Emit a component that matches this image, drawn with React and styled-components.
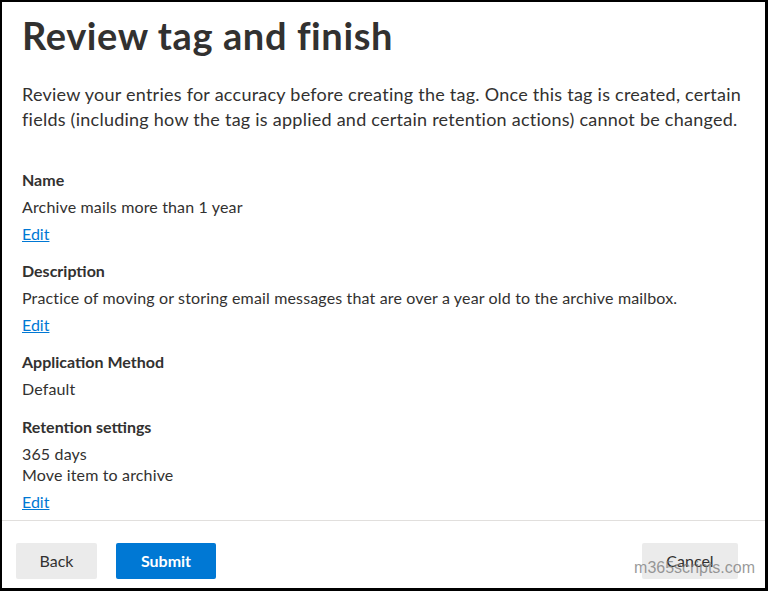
import React from 'react';
import styled, { createGlobalStyle } from 'styled-components';

const COLORS = {
	text: '#323130',
	link: '#0078d4',
	primary: '#0078d4',
	neutral: '#ebebeb',
	divider: '#e1dfdd'
};

const sections = [
	{ label: 'Name', values: ['Archive mails more than 1 year'], editable: true },
	{
		label: 'Description',
		values: [
			'Practice of moving or storing email messages that are over a year old to the archive mailbox.'
		],
		editable: true
	},
	{ label: 'Application Method', values: ['Default'], editable: false },
	{
		label: 'Retention settings',
		values: ['365 days', 'Move item to archive'],
		editable: true
	}
];

function App() {
	return (
		<>
			<GlobalStyle />
			<Frame>
				<Content>
					<Title>Review tag and finish</Title>
					<Intro>
						Review your entries for accuracy before creating the tag. Once this
						tag is created, certain fields (including how the tag is applied and
						certain retention actions) cannot be changed.
					</Intro>
					{sections.map((s) => (
						<Section key={s.label} editable={s.editable}>
							<Label>{s.label}</Label>
							{s.values.map((v) => (
								<Value key={v}>{v}</Value>
							))}
							{s.editable && <EditLink href="#">Edit</EditLink>}
						</Section>
					))}
				</Content>
				<Footer>
					<Button>Back</Button>
					<Button primary>Submit</Button>
					<Spacer />
					<Button wide>Cancel</Button>
					<Watermark>m365scripts.com</Watermark>
				</Footer>
			</Frame>
		</>
	);
}

export default App;

const GlobalStyle = createGlobalStyle`
	html, body {
		margin: 0;
		padding: 0;
		background: #fff;
	}
	* {
		box-sizing: border-box;
	}
`;

const Frame = styled.div`
	width: 768px;
	height: 591px;
	border-style: solid;
	border-color: #000;
	border-width: 2px 3px 3px 2px;
	display: flex;
	flex-direction: column;
	font-family: Lato, 'Open Sans', sans-serif;
	color: ${COLORS.text};
	background: #fff;
	overflow: hidden;
`;

const Content = styled.div`
	flex: 1;
	min-height: 0;
	padding: 0 20px;
`;

const Title = styled.h1`
	margin: 10px 0 0;
	font-size: 38px;
	line-height: 46px;
	font-weight: 700;
	letter-spacing: 0.6px;
`;

const Intro = styled.p`
	margin: 24px 0 37px;
	font-size: 18px;
	line-height: 25px;
	letter-spacing: 0.25px;
	max-width: 740px;
`;

const Section = styled.div`
	display: flex;
	flex-direction: column;
	align-items: flex-start;
	margin-bottom: ${(p) => (p.editable ? '15px' : '17px')};
`;

const Label = styled.div`
	font-size: 16px;
	line-height: 22px;
	font-weight: 700;
	margin-bottom: 5px;
`;

const Value = styled.div`
	font-size: 16px;
	line-height: 21px;
	letter-spacing: 0.15px;
`;

const EditLink = styled.a`
	margin-top: 6px;
	font-size: 16px;
	line-height: 22px;
	color: ${COLORS.link};
	text-decoration: underline;
`;

const Footer = styled.div`
	position: relative;
	flex-shrink: 0;
	display: flex;
	align-items: center;
	gap: 19px;
	height: 68px;
	padding: 12px 27px 0 14px;
	border-top: 1px solid ${COLORS.divider};
`;

const Spacer = styled.div`
	flex: 1;
`;

const Button = styled.button`
	height: 36px;
	min-width: ${(p) => (p.primary ? '100px' : p.wide ? '96px' : '81px')};
	padding: 0 20px;
	border: none;
	border-radius: 2px;
	background: ${(p) => (p.primary ? COLORS.primary : COLORS.neutral)};
	color: ${(p) => (p.primary ? '#fff' : COLORS.text)};
	font-family: Lato, 'Open Sans', sans-serif;
	font-size: 16px;
	font-weight: ${(p) => (p.primary ? 700 : 400)};
`;

const Watermark = styled.span`
	position: absolute;
	right: 10px;
	top: 38px;
	font-family: 'Liberation Sans', Arial, sans-serif;
	font-size: 16px;
	color: rgba(120, 120, 120, 0.75);
	pointer-events: none;
`;
